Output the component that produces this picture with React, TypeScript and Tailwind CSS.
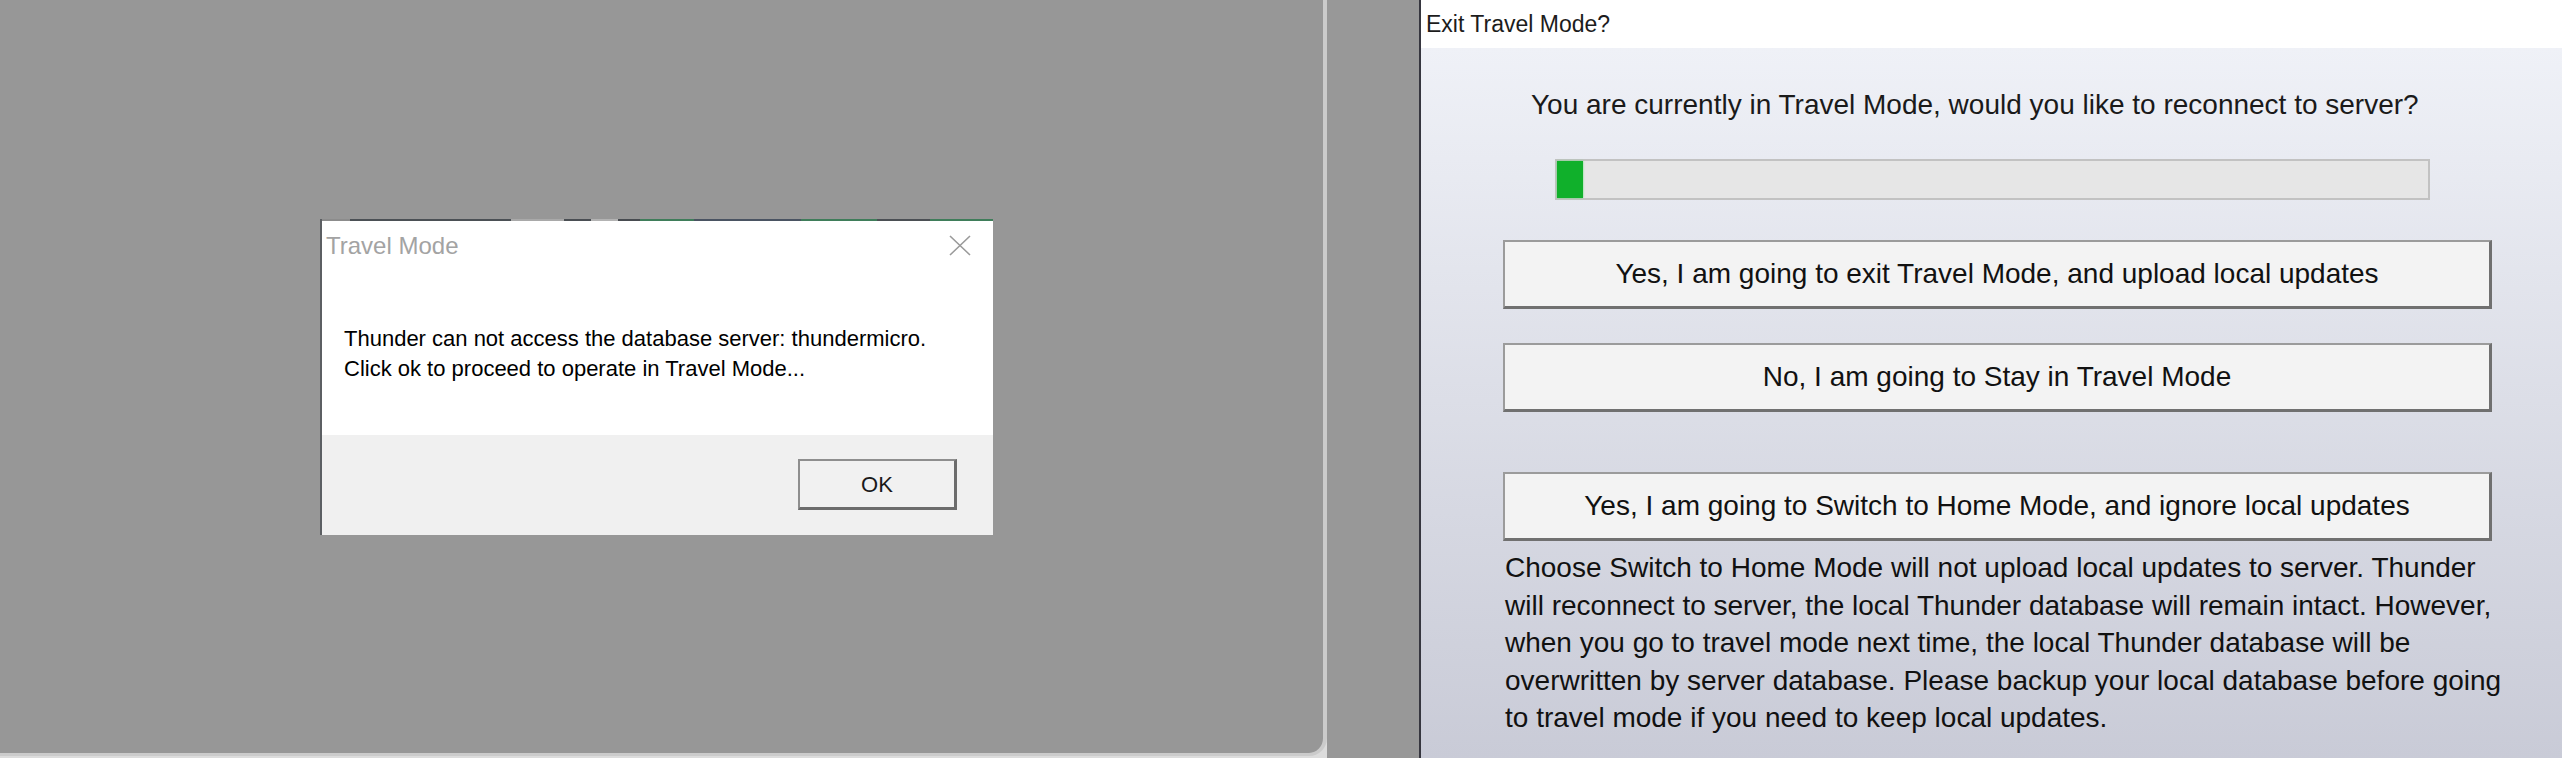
import React from "react";

const FONT = { fontFamily: '"Liberation Sans", Arial, sans-serif' };

function LeftDialog() {
  return (
    <div className="w-[673px] h-[316px] flex flex-col bg-white border-l-2 border-[#5c5f63]">
      {/* colored strip at top (window behind) */}
      <div className="h-[2px] flex">
        <div className="w-[28px] bg-[#8c8c8c]" />
        <div className="w-[161px] bg-[#4b5055]" />
        <div className="w-[53px] bg-[#a9a9a9]" />
        <div className="w-[27px] bg-[#4a4e53]" />
        <div className="w-[27px] bg-[#b3b3b3]" />
        <div className="w-[22px] bg-[#474b50]" />
        <div className="w-[54px] bg-[#3f7d5a]" />
        <div className="w-[107px] bg-[#4a5362]" />
        <div className="w-[76px] bg-[#3f7d5a]" />
        <div className="w-[53px] bg-[#4b4f54]" />
        <div className="flex-1 bg-[#3f7d5a]" />
      </div>
      <div className="h-[214px] flex flex-col">
        <div className="flex items-start justify-between pl-[4px] pr-[22px] pt-[11px]">
          <span className="text-[24px] leading-[28px] text-[#a3a3a3]">Travel Mode</span>
          <svg width="22" height="21" viewBox="0 0 22 21" className="mt-[3px]">
            <path d="M1 1 L21 20 M21 1 L1 20" stroke="#9a9a9a" strokeWidth="1.6" fill="none" />
          </svg>
        </div>
        <div className="pl-[22px] pt-[64px] text-[22px] leading-[30px] text-black">
          <div>Thunder can not access the database server: thundermicro.</div>
          <div>Click ok to proceed to operate in Travel Mode...</div>
        </div>
      </div>
      <div className="flex-1 bg-[#f0f0f0] flex justify-end items-start pt-[24px] pr-[36px]">
        <div className="w-[159px] h-[51px] bg-[#f1f1f1] border-2 border-[#8e8e8e] border-b-[3px] border-r-[3px] border-b-[#6c6c6c] border-r-[#6c6c6c] flex items-center justify-center text-[22px] text-[#1a1a1a]">
          OK
        </div>
      </div>
    </div>
  );
}

function WinButton({ label, mt }: { label: string; mt: string }) {
  return (
    <div
      className={`${mt} w-[989px] h-[69px] bg-[#f3f3f3] border-2 border-[#9b9b9b] border-b-[3px] border-r-[3px] border-b-[#707070] border-r-[#707070] flex items-center justify-center text-[28px] text-[#111]`}
    >
      {label}
    </div>
  );
}

export default function App() {
  return (
    <div className="w-[2562px] h-[758px] flex bg-[#dcdcdc] overflow-hidden" style={FONT}>
      {/* left window */}
      <div className="w-[1327px] h-[756px] bg-[#979797] border-r-[4px] border-b-[3px] border-[#cbcbcb] rounded-br-[18px] pl-[320px] pt-[219px] shrink-0">
        <LeftDialog />
      </div>
      {/* gap strip */}
      <div className="w-[92px] h-full bg-[#989898] shrink-0" />
      <div className="w-[2px] h-full bg-[#36363f] shrink-0" />
      {/* right dialog */}
      <div className="flex-1 h-full flex flex-col">
        <div className="h-[48px] bg-white flex items-center pl-[5px] text-[23px] text-[#1c1c1c]">
          Exit Travel Mode?
        </div>
        <div className="flex-1 bg-gradient-to-b from-[#eff1f7] to-[#c9cbd7] pl-[82px] pt-[41px]">
          <div className="pl-[28px] text-[28px] leading-[32px] text-[#1a1a1a] whitespace-nowrap">
            You are currently in Travel Mode, would you like to reconnect to server?
          </div>
          <div className="ml-[52px] mt-[38px] w-[875px] h-[41px] bg-[#e6e6e6] border-2 border-[#c2c2c2] flex">
            <div className="w-[26px] h-full bg-[#10b02b] shadow-[0_0_2px_#6ee07e]" />
          </div>
          <WinButton mt="mt-[40px]" label="Yes, I am going to exit Travel Mode, and upload local updates" />
          <WinButton mt="mt-[34px]" label="No, I am going to Stay in Travel Mode" />
          <WinButton mt="mt-[60px]" label="Yes, I am going to Switch to Home Mode, and ignore local updates" />
          <div className="mt-[8px] pl-[2px] text-[28px] leading-[37.6px] text-[#111] whitespace-nowrap">
            <div>Choose Switch to Home Mode will not upload local updates to server. Thunder</div>
            <div>will reconnect to server, the local Thunder database will remain intact. However,</div>
            <div>when you go to travel mode next time, the local Thunder database will be</div>
            <div>overwritten by server database. Please backup your local database before going</div>
            <div>to travel mode if you need to keep local updates.</div>
          </div>
        </div>
      </div>
    </div>
  );
}
